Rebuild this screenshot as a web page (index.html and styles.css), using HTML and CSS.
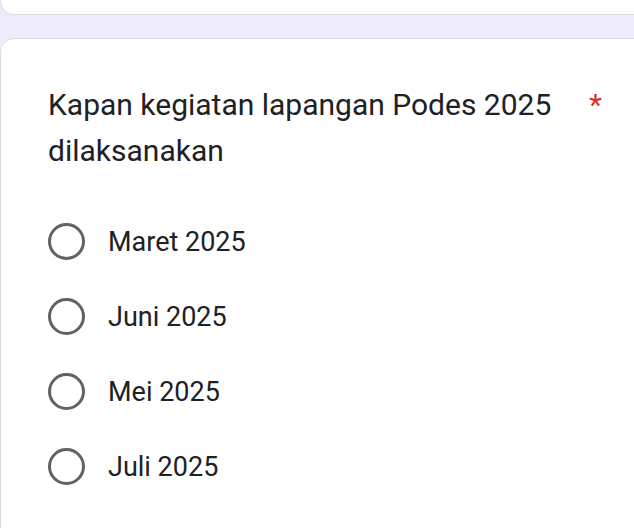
FILE: index.html
```html
<!DOCTYPE html>
<html lang="id">
<head>
  <meta charset="UTF-8" />
  <title>Podes 2025</title>
  <link rel="stylesheet" href="styles.css">
</head>
<body>
  <div class="card card-prev"></div>

  <div class="card question">
    <div class="question-title">
      <div class="title-text">Kapan kegiatan lapangan Podes 2025 dilaksanakan</div>
      <span class="required">*</span>
    </div>

    <div class="options">
      <label class="option">
        <span class="radio"></span>
        <span class="option-label">Maret 2025</span>
      </label>
      <label class="option">
        <span class="radio"></span>
        <span class="option-label">Juni 2025</span>
      </label>
      <label class="option">
        <span class="radio"></span>
        <span class="option-label">Mei 2025</span>
      </label>
      <label class="option">
        <span class="radio"></span>
        <span class="option-label">Juli 2025</span>
      </label>
    </div>
  </div>
</body>
</html>
```

FILE: styles.css
```css
html, body {
  margin: 0;
  padding: 0;
  height: 100%;
  overflow: hidden;
}

body {
  background: #eeebfc;
  font-family: Roboto, Arial, sans-serif;
  color: #202124;
}

.card {
  background: #fff;
  border: 1px solid #dadce0;
  border-radius: 14px;
  width: 680px;
  box-sizing: border-box;
}

.card-prev {
  height: 15px;
  border-top: none;
  border-radius: 0 0 14px 14px;
  margin-bottom: 23px;
}

.question {
  height: 600px;
  padding: 43px 0 0 47px;
}

.question-title {
  display: flex;
  align-items: flex-start;
  font-size: 30px;
  line-height: 46px;
}

.title-text {
  width: 528px;
}

.required {
  color: #d93025;
  margin-left: 13px;
}

.options {
  margin-top: 30px;
}

.option {
  display: flex;
  align-items: center;
  height: 75px;
}

.radio {
  width: 37px;
  height: 37px;
  box-sizing: border-box;
  border: 3.5px solid #5f6368;
  border-radius: 50%;
  flex-shrink: 0;
}

.option-label {
  margin-left: 23px;
  font-size: 27px;
}
```
